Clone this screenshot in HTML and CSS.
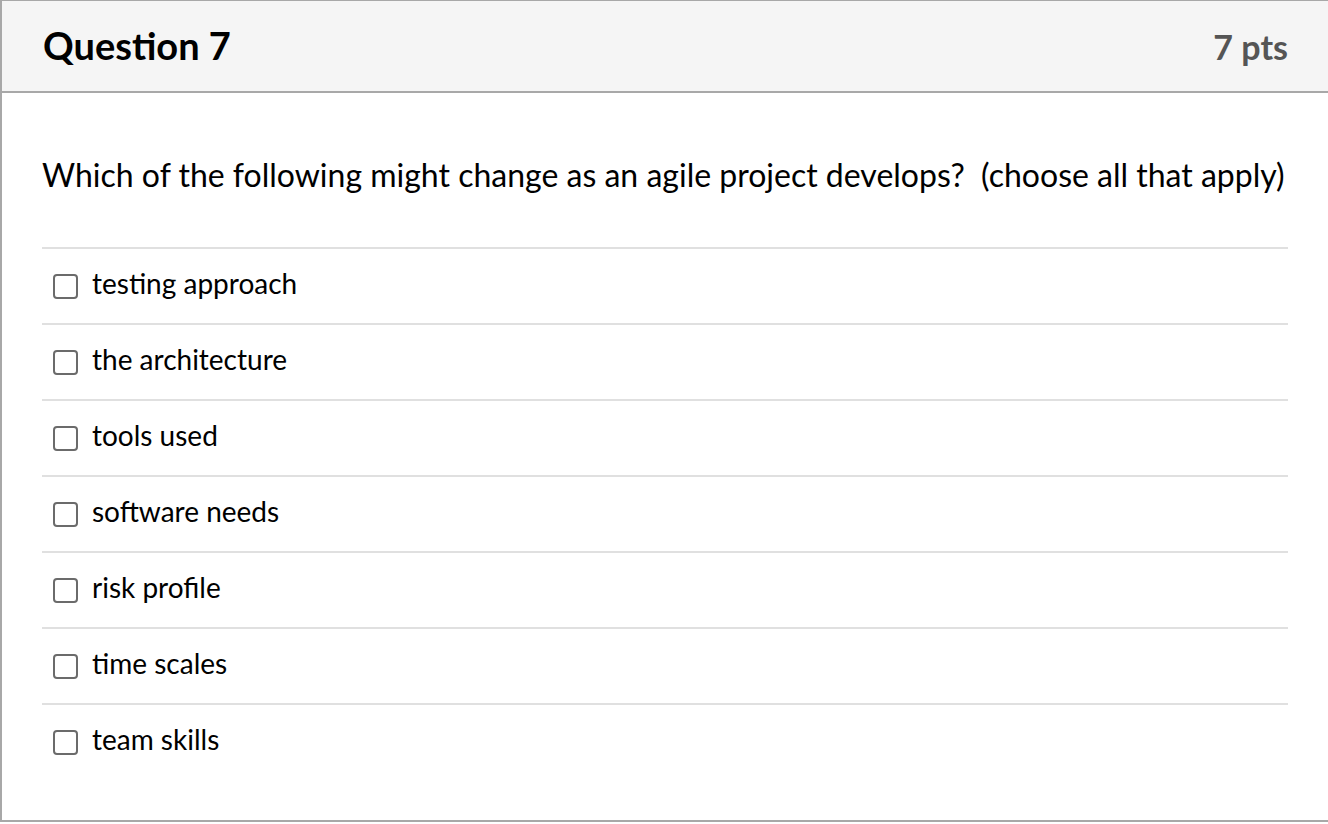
FILE: index.html
```html
<!DOCTYPE html>
<html>
<head>
<meta charset="utf-8">
<link rel="stylesheet" href="styles.css">
</head>
<body>
<div class="question">
  <div class="header">
    <span class="title">Question 7</span>
    <span class="pts">7 pts</span>
  </div>
  <div class="content">
    <div class="text">Which of the following might change as an agile project develops?&nbsp; (choose all that apply)</div>
    <div class="answers">
      <label class="answer"><span class="box"></span><span class="label">testing approach</span></label>
      <label class="answer"><span class="box"></span><span class="label">the architecture</span></label>
      <label class="answer"><span class="box"></span><span class="label">tools used</span></label>
      <label class="answer"><span class="box"></span><span class="label">software needs</span></label>
      <label class="answer"><span class="box"></span><span class="label">risk profile</span></label>
      <label class="answer"><span class="box"></span><span class="label">time scales</span></label>
      <label class="answer"><span class="box"></span><span class="label">team skills</span></label>
    </div>
  </div>
</div>
</body>
</html>
```

FILE: styles.css
```css
html, body {
  margin: 0;
  padding: 0;
  background: #fff;
  overflow: hidden;
}
body {
  font-family: Lato, "Noto Sans", sans-serif;
  color: #000;
}
.question {
  box-sizing: border-box;
  width: calc(100% + 4px);
  height: 822px;
  border: 2px solid #a8a8a8;
  border-top-width: 1px;
}
.header {
  display: flex;
  justify-content: space-between;
  align-items: center;
  height: 90px;
  background: #f5f5f5;
  border-bottom: 2px solid #a8a8a8;
  padding: 0 42px 0 41px;
}
.title {
  font-weight: bold;
  font-size: 38px;
  margin-top: -2px;
}
.pts {
  font-weight: bold;
  font-size: 34px;
  color: #555;
}
.content {
  padding: 0 42px 0 40px;
}
.text {
  font-size: 32px;
  padding-top: 62px;
  line-height: 40px;
  height: 92px;
  border-bottom: 2px solid #e0e0e0;
}
.answer {
  display: flex;
  align-items: center;
  height: 74px;
  border-bottom: 2px solid #e0e0e0;
  font-size: 28px;
}
.answer:last-child {
  border-bottom: none;
}
.box {
  width: 21px;
  height: 21px;
  border: 2px solid #6b6b6b;
  border-radius: 4px;
  margin-left: 11px;
  margin-right: 14px;
  flex: none;
}
.label {
  margin-top: -6px;
}
```
